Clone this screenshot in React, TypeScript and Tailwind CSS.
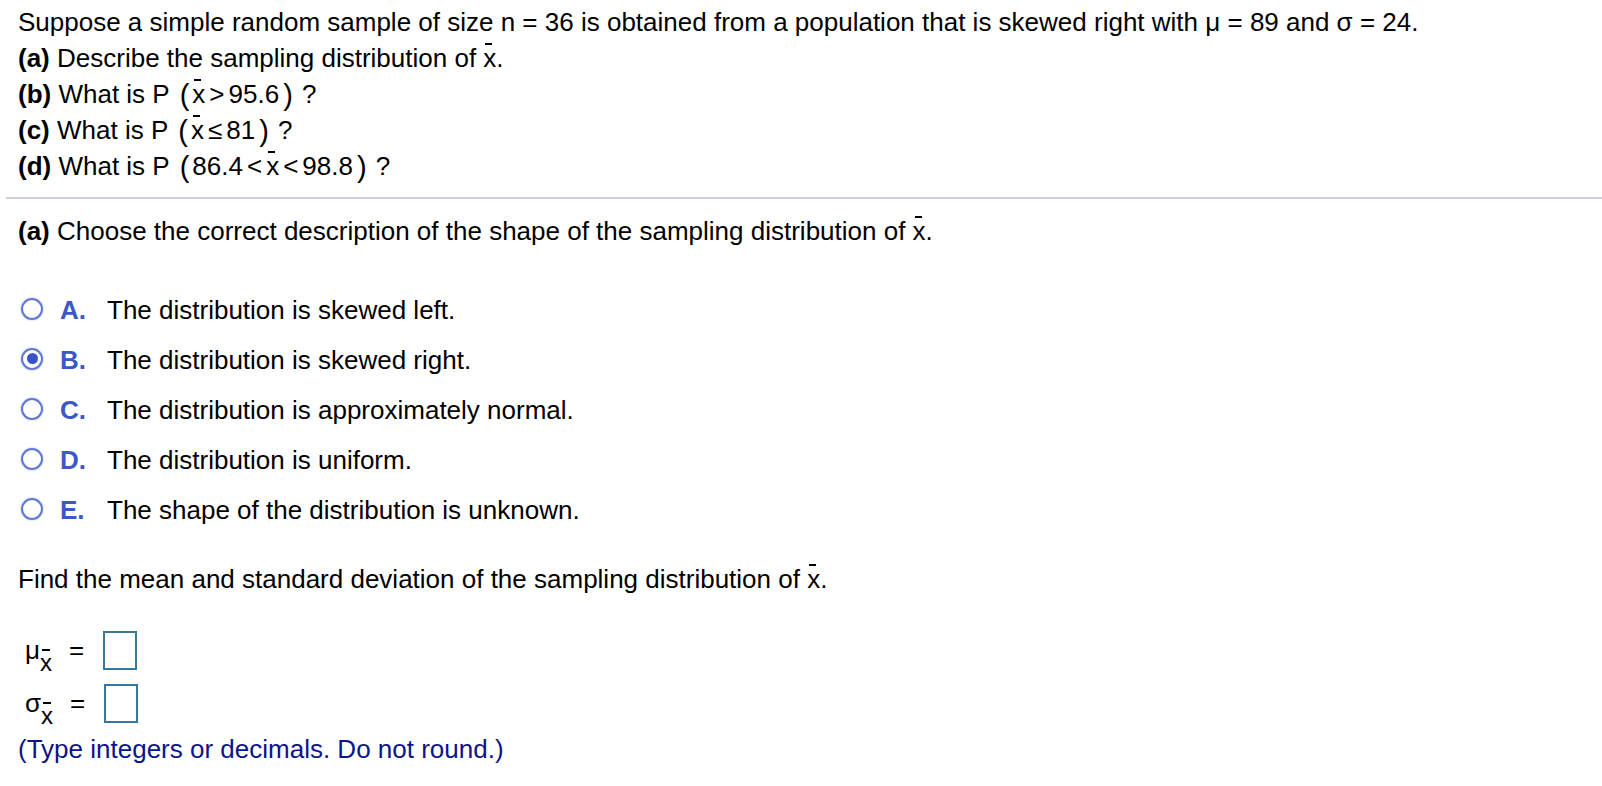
import React from "react";

const Xbar = () => (
  <span className="relative inline-block">
    x
    <span className="absolute left-[2px] top-[3px] h-[2px] w-[7px] bg-black" />
  </span>
);

const LP = () => (
  <span className="relative top-[2px] ml-[10px] mr-[3px] text-[29px] leading-[0]">(</span>
);
const RP = () => (
  <span className="relative top-[2px] ml-[4px] mr-[2px] text-[29px] leading-[0]">)</span>
);

const Op = ({ c }: { c: string }) => <span className="mx-[4px]">{c}</span>;

const Radio = ({ checked }: { checked?: boolean }) => (
  <span className="mb-[3px] flex h-[22px] w-[22px] items-center justify-center rounded-full border-2 border-[#6076d4] shadow-[0_0_2px_#a7b3ea]">
    {checked && <span className="h-[11px] w-[11px] rounded-full bg-[#3a52c6]" />}
  </span>
);

const Sub = ({ sym }: { sym: string }) => (
  <span className="leading-[39px]">
    {sym}
    <span className="relative top-[12px] inline-block text-[24px] leading-[0]">
      x
      <span className="absolute left-[2px] top-[-14px] h-[2px] w-[8px] bg-black" />
    </span>
  </span>
);

const options = [
  { l: "A.", t: "The distribution is skewed left." },
  { l: "B.", t: "The distribution is skewed right.", c: true },
  { l: "C.", t: "The distribution is approximately normal." },
  { l: "D.", t: "The distribution is uniform." },
  { l: "E.", t: "The shape of the distribution is unknown." },
];

export default function App() {
  return (
    <div className="h-[786px] w-[1602px] overflow-hidden bg-white font-['Liberation_Sans',Arial,sans-serif] text-[26px] text-black">
      <div className="pl-[18px] pt-[4px]">
        <div className="h-[36px] leading-[36px] whitespace-nowrap">
          Suppose a simple random sample of size n = 36 is obtained from a population that is skewed right with μ = 89 and σ = 24.
        </div>
        <div className="h-[36px] leading-[36px] whitespace-nowrap">
          <b>(a)</b> Describe the sampling distribution of <Xbar />.
        </div>
        <div className="h-[36px] leading-[36px] whitespace-nowrap">
          <b>(b)</b> What is P<LP />
          <Xbar />
          <Op c=">" />
          95.6
          <RP /> ?
        </div>
        <div className="h-[36px] leading-[36px] whitespace-nowrap">
          <b>(c)</b> What is P<LP />
          <Xbar />
          <Op c="≤" />
          81
          <RP /> ?
        </div>
        <div className="h-[36px] leading-[36px] whitespace-nowrap">
          <b>(d)</b> What is P<LP />
          86.4
          <Op c="<" />
          <Xbar />
          <Op c="<" />
          98.8
          <RP /> ?
        </div>
      </div>

      <div className="ml-[6px] mt-[13px] h-[2px] bg-[#cbd0dc]" />

      <div className="pl-[18px]">
        <div className="mt-[14px] h-[36px] leading-[36px] whitespace-nowrap">
          <b>(a)</b> Choose the correct description of the shape of the sampling distribution of <Xbar />.
        </div>

        <div className="mt-[36px] flex flex-col">
          {options.map((o) => (
            <div key={o.l} className="flex h-[50px] items-center leading-[50px]">
              <span className="ml-[3px]">
                <Radio checked={o.c} />
              </span>
              <span className="ml-[17px] w-[47px] font-bold text-[#3d57c6]">{o.l}</span>
              <span className="whitespace-nowrap">{o.t}</span>
            </div>
          ))}
        </div>

        <div className="mt-[26px] h-[36px] leading-[36px] whitespace-nowrap">
          Find the mean and standard deviation of the sampling distribution of <Xbar />.
        </div>

        <div className="mt-[34px] flex flex-col gap-[14px] pl-[7px]">
          {["μ", "σ"].map((s) => (
            <div key={s} className="flex h-[39px] items-center">
              <Sub sym={s} />
              <span className="ml-[17px] leading-[39px]">=</span>
              <span className="ml-[19px] h-[39px] w-[34px] border-2 border-[#34789c]" />
            </div>
          ))}
        </div>

        <div className="mt-[8px] h-[36px] leading-[36px] whitespace-nowrap text-[#0c1489]">
          (Type integers or decimals. Do not round.)
        </div>
      </div>
    </div>
  );
}
